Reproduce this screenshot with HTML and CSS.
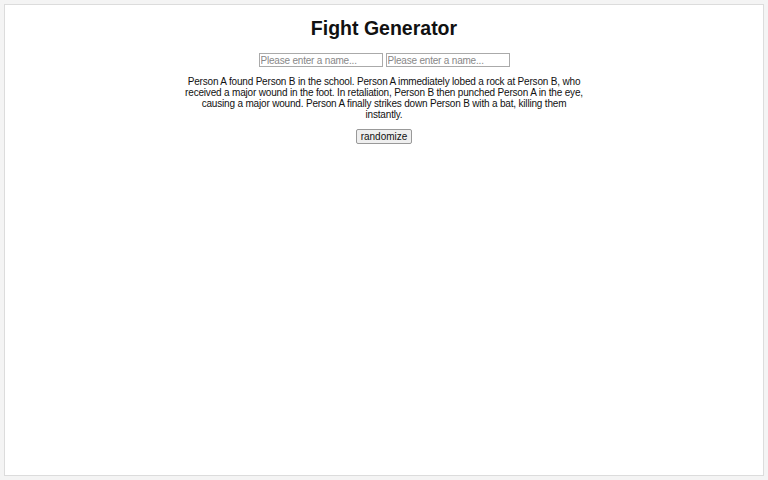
FILE: index.html
```html
<!DOCTYPE html>
<html lang="en">
<head>
    <meta charset="UTF-8">
    <meta name="viewport" content="width=device-width, initial-scale=1.0">
    <title>Fight Generator</title>
    <link rel="stylesheet" href="styles.css">
</head>
<body>
    <div class="container">
        <h1>Fight Generator</h1>

        <div class="names">
            <input type="text" id="nameA" placeholder="Please enter a name...">
            <input type="text" id="nameB" placeholder="Please enter a name...">
        </div>

        <p id="story">Person A found Person B in the school. Person A immediately lobed a rock at Person B, who received a major wound in the foot. In retaliation, Person B then punched Person A in the eye, causing a major wound. Person A finally strikes down Person B with a bat, killing them instantly.</p>

        <button type="button" id="randomize">randomize</button>
    </div>
</body>
</html>
```

FILE: styles.css
```css
body {
    font-family: 'Liberation Sans', Arial, sans-serif;
    background-color: #f4f4f4;
    margin: 0;
    padding: 4px;
    color: #111;
}

.container {
    background-color: #fff;
    border: 1px solid #dcdcdc;
    box-sizing: border-box;
    height: 472px;
    text-align: center;
}

h1 {
    font-size: 19.5px;
    margin: 0;
    padding-top: 11px;
    line-height: 24px;
}

.names {
    margin-top: 13px;
    display: flex;
    justify-content: center;
    gap: 3px;
}

.names input {
    width: 124px;
    height: 14px;
    box-sizing: border-box;
    border: 1px solid #aaa;
    padding: 0 1px;
    font-family: inherit;
    font-size: 10px;
    letter-spacing: -0.2px;
}

.names input::placeholder {
    color: #888;
}

#story {
    width: 399px;
    margin: 9px auto 0;
    font-size: 10px;
    letter-spacing: -0.18px;
    line-height: 11px;
}

#randomize {
    margin-top: 9px;
    font-family: inherit;
    font-size: 10px;
    height: 15px;
    padding: 0 4px;
    background-color: #efefef;
    border: 1px solid #999;
    border-radius: 2px;
    color: #111;
}
```
